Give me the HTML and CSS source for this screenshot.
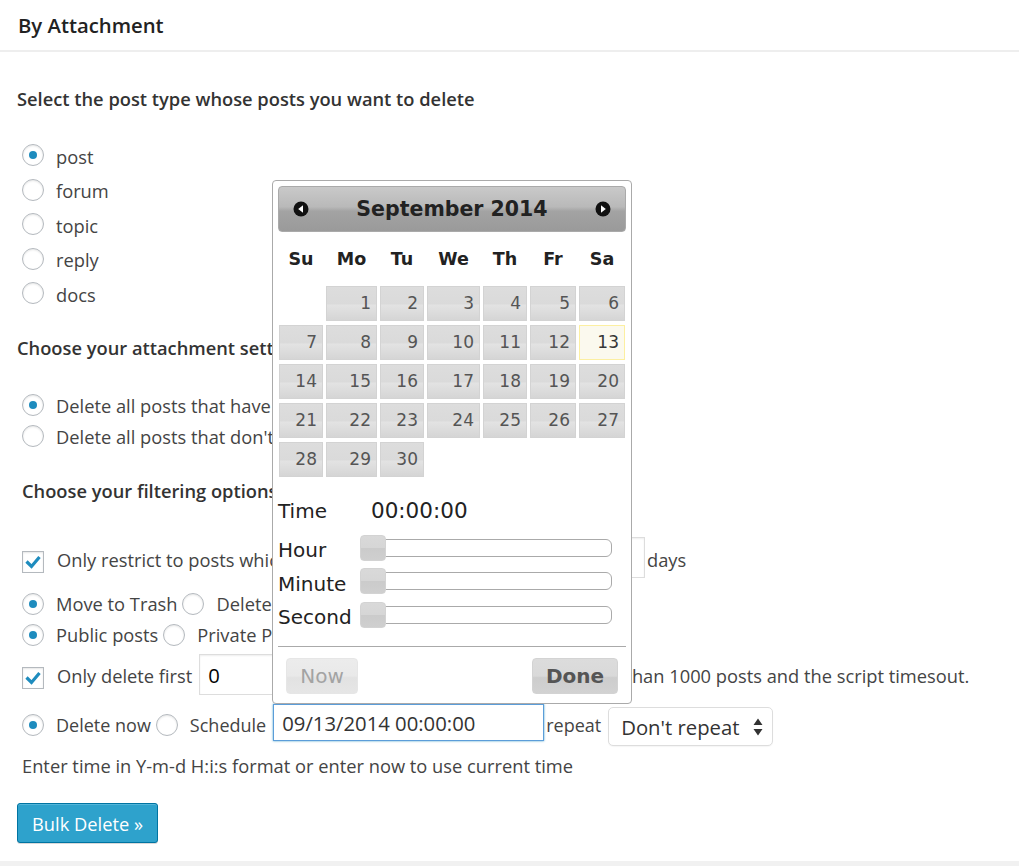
FILE: index.html
```html
<!DOCTYPE html>
<html>
<head>
<meta charset="utf-8">
<title>By Attachment</title>
<link rel="stylesheet" href="styles.css">
</head>
<body>
<div class="postbox">
  <h3 class="hndle">By Attachment</h3>
  <div class="inside">
    <h4 class="q q1">Select the post type whose posts you want to delete</h4>
    <ul class="opts types">
      <li><span class="radio on"></span><span>post</span></li>
      <li><span class="radio"></span><span>forum</span></li>
      <li><span class="radio"></span><span>topic</span></li>
      <li><span class="radio"></span><span>reply</span></li>
      <li><span class="radio"></span><span>docs</span></li>
    </ul>
    <h4 class="q q2">Choose your attachment settings</h4>
    <ul class="opts att">
      <li><span class="radio on"></span><span>Delete all posts that have attachments</span></li>
      <li><span class="radio"></span><span>Delete all posts that don't have attachments</span></li>
    </ul>
    <h4 class="q q3">Choose your filtering options</h4>
    <div class="filters">
      <div class="row r1">
        <span class="check"><svg width="22" height="22" viewBox="0 0 22 22"><path d="M4.5 10.5 L9.5 15.5 L17.5 6" fill="none" stroke="#1e8cbe" stroke-width="3.2" stroke-linejoin="miter"/></svg></span>
        <span class="lbl lbl-restrict">Only restrict to posts which are older than</span>
        <input class="txt days-in" type="text" value="">
        <span class="lbl days">days</span>
      </div>
      <div class="row r2">
        <span class="radio on"></span><span class="lbl">Move to Trash</span>
        <span class="radio sec"></span><span class="lbl">Delete permanently</span>
      </div>
      <div class="row r3">
        <span class="radio on"></span><span class="lbl">Public posts</span>
        <span class="radio sec"></span><span class="lbl">Private Posts</span>
      </div>
      <div class="row r4">
        <span class="check"><svg width="22" height="22" viewBox="0 0 22 22"><path d="M4.5 10.5 L9.5 15.5 L17.5 6" fill="none" stroke="#1e8cbe" stroke-width="3.2" stroke-linejoin="miter"/></svg></span>
        <span class="lbl lbl-first">Only delete first</span>
        <input class="txt limit-in" type="text" value="0">
        <span class="lbl after">posts.Use this option if there are more than 1000 posts and the script timesout.</span>
      </div>
      <div class="row r5">
        <span class="radio on"></span><span class="lbl">Delete now</span>
        <span class="radio sec"></span><span class="lbl">Schedule</span>
        <input class="txt date-in" type="text" value="09/13/2014 00:00:00">
        <span class="lbl repeat">repeat</span>
        <div class="select">
          <span>Don't repeat</span>
          <svg width="10" height="20" viewBox="0 0 10 20"><path d="M5 1.5 L9.5 8 H0.5Z M5 18.5 L9.5 12 H0.5Z" fill="#333"/></svg>
        </div>
      </div>
    </div>
    <p class="hint">Enter time in Y-m-d H:i:s format or enter now to use current time</p>
    <button class="bulk" type="button">Bulk Delete »</button>
  </div>
</div>

<div class="dp">
  <div class="dp-header">
    <span class="dp-nav"><svg width="16" height="16" viewBox="0 0 16 16"><circle cx="8" cy="8" r="7.5" fill="#111"/><path d="M10 4.2 L5.2 8 L10 11.8Z" fill="#fff"/></svg></span>
    <div class="dp-title">September 2014</div>
    <span class="dp-nav"><svg width="16" height="16" viewBox="0 0 16 16"><circle cx="8" cy="8" r="7.5" fill="#111"/><path d="M6 4.2 L10.8 8 L6 11.8Z" fill="#fff"/></svg></span>
  </div>
  <div class="dp-grid dp-week">
    <span>Su</span><span>Mo</span><span>Tu</span><span>We</span><span>Th</span><span>Fr</span><span>Sa</span>
  </div>
  <div class="dp-grid dp-days">
    <span class="empty"></span>
    <span class="day">1</span><span class="day">2</span><span class="day">3</span><span class="day">4</span><span class="day">5</span><span class="day">6</span>
    <span class="day">7</span><span class="day">8</span><span class="day">9</span><span class="day">10</span><span class="day">11</span><span class="day">12</span><span class="day today">13</span>
    <span class="day">14</span><span class="day">15</span><span class="day">16</span><span class="day">17</span><span class="day">18</span><span class="day">19</span><span class="day">20</span>
    <span class="day">21</span><span class="day">22</span><span class="day">23</span><span class="day">24</span><span class="day">25</span><span class="day">26</span><span class="day">27</span>
    <span class="day">28</span><span class="day">29</span><span class="day">30</span>
  </div>
  <div class="tp">
    <div class="tp-row tp-time"><span class="tp-label">Time</span><span class="tp-val">00:00:00</span></div>
    <div class="tp-row"><span class="tp-label sl">Hour</span><div class="slider"><span class="handle"></span></div></div>
    <div class="tp-row"><span class="tp-label sl">Minute</span><div class="slider"><span class="handle"></span></div></div>
    <div class="tp-row"><span class="tp-label sl">Second</span><div class="slider"><span class="handle"></span></div></div>
  </div>
  <div class="dp-buttons">
    <button class="dp-btn now" type="button">Now</button>
    <button class="dp-btn done" type="button">Done</button>
  </div>
</div>
</body>
</html>
```
FILE: styles.css
```css
* { box-sizing: border-box; }

body {
  margin: 0;
  background: #f1f1f1;
  font-family: "Open Sans", "Liberation Sans", sans-serif;
  font-size: 18.3px;
  color: #444;
}

.postbox {
  background: #fff;
  height: 861px;
  overflow: hidden;
}

.hndle {
  margin: 0;
  height: 52px;
  line-height: 50px;
  padding-left: 18px;
  font-size: 20.3px;
  font-weight: 600;
  color: #222;
  border-bottom: 2px solid #eeeeee;
}

.inside { padding-left: 17px; }

.q {
  margin: 0;
  font-size: 18.3px;
  font-weight: 600;
  line-height: 24px;
  color: #333;
  white-space: nowrap;
}
.q1 { margin-top: 35px; }
.q2 { margin-top: 25.5px; }
.q3 { margin-top: 28px; margin-left: 5px; }

.opts {
  list-style: none;
  padding: 0;
  margin: 0 0 0 5px;
}
.opts li {
  display: flex;
  align-items: center;
  line-height: 24px;
  white-space: nowrap;
}
.opts li span + span { padding-top: 3px; }
.types { margin-top: 27px; }
.types li { height: 34.5px; }
.att { margin-top: 29px; }
.att li { height: 31px; }

.radio {
  flex: none;
  width: 22px;
  height: 22px;
  border: 1px solid #b4b9be;
  border-radius: 50%;
  background: #fff;
  box-shadow: inset 0 1px 2px rgba(0,0,0,.1);
  margin-right: 12px;
  display: flex;
  align-items: center;
  justify-content: center;
}
.radio.on::before {
  content: "";
  width: 8px;
  height: 8px;
  border-radius: 50%;
  background: #1e8cbe;
}
.radio.sec { margin-left: 5px; }

.check {
  flex: none;
  width: 22px;
  height: 22px;
  border: 1px solid #b4b9be;
  background: #fff;
  box-shadow: inset 0 1px 2px rgba(0,0,0,.1);
  margin-right: 13px;
  display: flex;
  align-items: center;
  justify-content: center;
}
.check svg { display: block; margin: -1px; }

.filters { margin-left: 5px; }
.row {
  display: flex;
  align-items: center;
  white-space: nowrap;
  line-height: 24px;
}
.lbl { flex: none; }

.r1 { margin-top: 34px; height: 41px; }
.r1 .check { margin-top: 8px; }
.r1 .lbl-restrict { width: 355px; padding-top: 4px; }
.r1 .days { margin-left: 2px; padding-top: 4px; }

.r2 { margin-top: 10.5px; height: 31px; }
.r3 { height: 31px; }

.r4 { margin-top: 3.5px; height: 41px; }
.r4 .check { margin-top: 6px; }
.r4 .lbl { padding-top: 3px; }
.r4 .after { margin-left: 4px; }

.r5 { margin-top: 9px; height: 42px; }
.r5 .lbl { font-size: 18px; }

.txt {
  font-family: "Open Sans", "Liberation Sans", sans-serif;
  font-size: 20.3px;
  color: #333;
  background: #fff;
  border: 1px solid #dddddd;
  box-shadow: inset 0 1px 2px rgba(0,0,0,.07);
  border-radius: 0;
  padding: 0 8px;
  margin: 0;
  outline: none;
}
.days-in { width: 233px; height: 41px; }
.limit-in { width: 89px; height: 41px; margin-left: 7px; color: #000; }
.date-in {
  align-self: flex-start;
  width: 271px;
  height: 37px;
  margin-left: 7px;
  border-color: #5b9dd9;
  box-shadow: 0 0 2px rgba(30,140,190,.8);
}
.repeat { margin-left: 2px; }

.select {
  align-self: flex-end;
  flex: none;
  width: 165px;
  height: 39px;
  margin-left: 7px;
  border: 1px solid #dddddd;
  border-radius: 5px;
  background: #fff;
  box-shadow: 0 1px 1px rgba(0,0,0,.04);
  display: flex;
  align-items: center;
  justify-content: space-between;
  padding: 0 9px 0 12px;
  color: #333;
  font-size: 20.3px;
}
.select svg { display: block; }

.hint {
  margin: 8px 0 0 5px;
  line-height: 24px;
  white-space: nowrap;
}

.bulk {
  display: block;
  margin-top: 25px;
  width: 141px;
  height: 40px;
  padding: 0;
  font-family: "Open Sans", "Liberation Sans", sans-serif;
  font-size: 18.3px;
  color: #fff;
  background: #2ea2cc;
  border: 1px solid #0074a2;
  border-radius: 3px;
  box-shadow: inset 0 1px 0 rgba(120,200,230,.5), 0 1px 0 rgba(0,0,0,.15);
}

/* ---------- datepicker ---------- */
.dp {
  position: absolute;
  left: 272px;
  top: 180px;
  width: 360px;
  background: #fff;
  border: 1px solid #aaaaaa;
  border-radius: 4px;
  padding: 5px;
  font-family: "DejaVu Sans", Verdana, sans-serif;
  color: #222;
}

.dp-header {
  height: 46px;
  border: 1px solid #aaaaaa;
  border-radius: 4px;
  background: linear-gradient(to bottom, #c9c9c9 0%, #b9b9b9 45%, #a3a3a3 55%, #9a9a9a 100%);
  display: flex;
  align-items: center;
  padding: 0 14px;
}
.dp-nav { flex: none; width: 16px; height: 16px; }
.dp-nav svg { display: block; }
.dp-title {
  flex: 1;
  text-align: center;
  font-size: 20.5px;
  font-weight: bold;
  color: #222;
}

.dp-grid {
  display: grid;
  grid-template-columns: 44px 51px 44px 53px 44px 46px 46px;
  column-gap: 3px;
  padding-left: 1px;
}
.dp-week {
  height: 54px;
  line-height: 54px;
  font-size: 17.5px;
  font-weight: bold;
  text-align: center;
  color: #222;
}
.dp-days {
  grid-auto-rows: 35px;
  row-gap: 4px;
}
.day {
  border: 1px solid #d3d3d3;
  background: linear-gradient(to bottom, #dddddd 0%, #dadada 52%, #e3e3e3 54%, #d5d5d5 100%);
  text-align: right;
  padding-right: 5px;
  line-height: 33px;
  font-size: 17px;
  color: #555;
}
.day.today {
  background: #fbf9ee;
  border-color: #fcefa1;
  color: #363636;
}

.tp { margin-top: 13px; }
.tp-row {
  display: flex;
  align-items: center;
  height: 33.5px;
  font-size: 20px;
  color: #222;
}
.tp-time { height: 41px; }
.tp-label { width: 82px; flex: none; }
.tp-label.sl { padding-top: 5px; line-height: 28px; }
.tp-val { padding-left: 11px; font-size: 21.5px; }
.slider {
  position: relative;
  width: 252px;
  height: 18px;
  border: 1px solid #aaaaaa;
  border-radius: 6px;
  background: #fff;
}
.handle {
  position: absolute;
  left: -1px;
  top: 50%;
  margin-top: -13px;
  width: 26px;
  height: 26px;
  border: 1px solid #d3d3d3;
  border-radius: 4px;
  background: linear-gradient(to bottom, #d9d9d9 0%, #d6d6d6 48%, #cbcbcb 52%, #cfcfcf 100%);
}

.dp-buttons {
  margin-top: 14.5px;
  border-top: 1px solid #aaaaaa;
  padding: 11px 8px 4px;
  display: flex;
  justify-content: space-between;
}
.dp-btn {
  height: 36px;
  padding: 0;
  border-radius: 4px;
  font-family: "DejaVu Sans", Verdana, sans-serif;
  font-size: 20px;
}
.dp-btn.now {
  width: 72px;
  border: 1px solid #e6e6e6;
  background: linear-gradient(to bottom, #ececec 0%, #e9e9e9 50%, #e2e2e2 55%, #e6e6e6 100%);
  color: #a3a3a3;
}
.dp-btn.done {
  width: 86px;
  border: 1px solid #d3d3d3;
  background: linear-gradient(to bottom, #dcdcdc 0%, #d9d9d9 50%, #cdcdcd 55%, #d2d2d2 100%);
  color: #555;
  font-weight: bold;
}
```
